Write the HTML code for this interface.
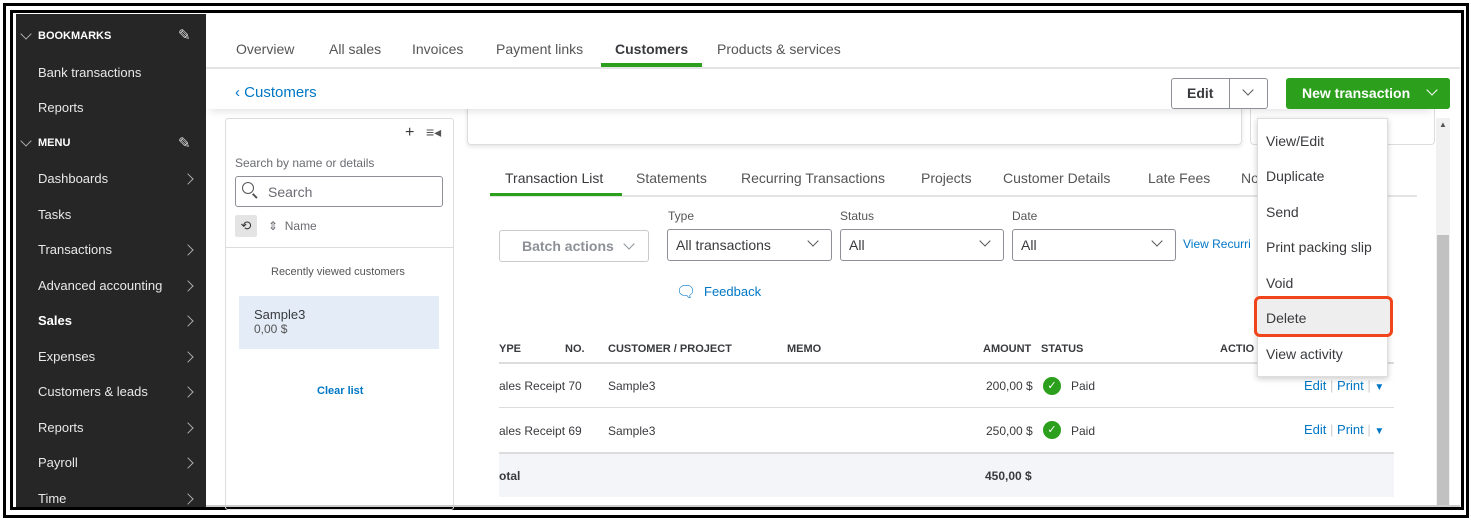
<!DOCTYPE html><html><head><meta charset="utf-8"><style>
*{box-sizing:border-box;margin:0;padding:0}
body{width:1471px;height:520px;background:#fff;position:relative;overflow:hidden;font-family:"Liberation Sans",sans-serif;color:#393a3d}
.a{position:absolute;white-space:nowrap}
.sb{position:absolute;left:16px;top:14px;width:190px;height:493px;background:#262626;color:#e8e8e8;font-size:13px}
.sb .a{left:22px}
.chev{position:absolute;left:168px;width:8px;height:8px;border-right:1.5px solid #aaa;border-top:1.5px solid #aaa;transform:rotate(45deg)}
.tab{font-size:14px;color:#555;top:41px}
.sel{position:absolute;border:1px solid #8d9096;border-radius:3px;height:32px;font-size:14px;color:#393a3d;padding:7px 8px}
.dn{position:absolute;width:8px;height:8px;border-right:1.5px solid #555;border-bottom:1.5px solid #555;transform:rotate(45deg)}
.th{font-size:11px;font-weight:bold;top:343px;color:#393a3d}
.td{font-size:12px;color:#393a3d}
.mi{position:absolute;left:8px;font-size:14px;color:#393a3d}
.ok{position:absolute;width:18px;height:18px;border-radius:50%;background:#2ca01c;color:#fff;font-size:11px;text-align:center;line-height:18px}
</style></head><body>
<div class="a" style="left:3px;top:3px;width:1466px;height:515px;border:3px solid #000"></div>
<div class="a" style="left:10px;top:10px;width:1454px;height:500px;border:3px solid #000"></div>

<div class="sb">
<div class="a" style="left:6px;top:16px;width:8px;height:8px;border-left:1px solid #aaa;border-bottom:1px solid #aaa;transform:rotate(-45deg)"></div>
<div class="a" style="top:16px;font-size:11px;font-weight:bold;color:#fff">BOOKMARKS</div>
<div class="a" style="left:162px!important;top:12px;font-size:15px;color:#ddd">✎</div>
<div class="a" style="top:51px">Bank transactions</div>
<div class="a" style="top:86px">Reports</div>
<div class="a" style="left:6px;top:123px;width:8px;height:8px;border-left:1px solid #aaa;border-bottom:1px solid #aaa;transform:rotate(-45deg)"></div>
<div class="a" style="top:123px;font-size:11px;font-weight:bold;color:#fff">MENU</div>
<div class="a" style="left:162px!important;top:120px;font-size:15px;color:#ddd">✎</div>
<div class="a" style="top:157px">Dashboards</div><div class="chev" style="top:161px"></div>
<div class="a" style="top:193px">Tasks</div>
<div class="a" style="top:228px">Transactions</div><div class="chev" style="top:232px"></div>
<div class="a" style="top:264px">Advanced accounting</div><div class="chev" style="top:268px"></div>
<div class="a" style="top:299px;font-weight:bold;color:#fff">Sales</div><div class="chev" style="top:303px"></div>
<div class="a" style="top:335px">Expenses</div><div class="chev" style="top:339px"></div>
<div class="a" style="top:370px">Customers &amp; leads</div><div class="chev" style="top:374px"></div>
<div class="a" style="top:406px">Reports</div><div class="chev" style="top:410px"></div>
<div class="a" style="top:441px">Payroll</div><div class="chev" style="top:445px"></div>
<div class="a" style="top:477px">Time</div><div class="chev" style="top:481px"></div>
</div>

<div class="a tab" style="left:236px">Overview</div>
<div class="a tab" style="left:329px">All sales</div>
<div class="a tab" style="left:412px">Invoices</div>
<div class="a tab" style="left:496px">Payment links</div>
<div class="a tab" style="left:615px;font-weight:bold;color:#393a3d">Customers</div>
<div class="a tab" style="left:717px">Products &amp; services</div>
<div class="a" style="left:206px;top:67px;width:1254px;height:2px;background:#e4e4e4"></div>
<div class="a" style="left:601px;top:63px;width:101px;height:4px;background:#2ca01c"></div>

<div class="a" style="left:235px;top:84px;font-size:15px;color:#0077c5">‹ Customers</div>
<div class="a" style="left:1171px;top:78px;width:97px;height:31px;border:1px solid #8d9096;border-radius:3px"></div>
<div class="a" style="left:1229px;top:78px;width:1px;height:31px;background:#8d9096"></div>
<div class="a" style="left:1187px;top:85px;font-size:14px;font-weight:bold">Edit</div>
<div class="dn" style="left:1244px;top:86px"></div>
<div class="a" style="left:1286px;top:78px;width:164px;height:31px;background:#2ca01c;border-radius:3px"></div>
<div class="a" style="left:1302px;top:85px;font-size:14px;font-weight:bold;color:#fff">New transaction</div>
<div class="a" style="left:1428px;top:86px;width:8px;height:8px;border-right:1.5px solid #fff;border-bottom:1.5px solid #fff;transform:rotate(45deg)"></div>

<div class="a" style="left:225px;top:118px;width:229px;height:392px;border:1px solid #ddd;border-radius:3px"></div>
<div class="a" style="left:405px;top:124px;font-size:16px">+</div>
<div class="a" style="left:426px;top:124px;font-size:14px;color:#555">≡◂</div>
<div class="a" style="left:235px;top:156px;font-size:12px;color:#6b6c72">Search by name or details</div>
<div class="a" style="left:235px;top:176px;width:208px;height:31px;border:1px solid #8d9096;border-radius:3px"></div>
<div class="a" style="left:242px;top:182px;width:12px;height:12px;border:1.5px solid #555;border-radius:50%"></div>
<div class="a" style="left:252px;top:195px;width:6px;height:1.5px;background:#555;transform:rotate(45deg)"></div>
<div class="a" style="left:268px;top:184px;font-size:14px;color:#6b6c72">Search</div>
<div class="a" style="left:235px;top:215px;width:22px;height:22px;background:#e4e4e4;border-radius:2px;font-size:13px;text-align:center;line-height:22px">⟲</div>
<div class="a" style="left:268px;top:219px;font-size:12px;color:#6b6c72">⇕&nbsp; Name</div>
<div class="a" style="left:226px;top:247px;width:227px;height:1px;background:#ddd"></div>
<div class="a" style="left:271px;top:266px;font-size:11px;color:#555">Recently viewed customers</div>
<div class="a" style="left:239px;top:296px;width:200px;height:53px;background:#e4ecf7"></div>
<div class="a" style="left:254px;top:307px;font-size:13px">Sample3</div>
<div class="a" style="left:254px;top:322px;font-size:12px;color:#555">0,00 $</div>
<div class="a" style="left:317px;top:385px;font-size:11px;font-weight:bold;color:#0077c5">Clear list</div>

<div class="a" style="left:467px;top:100px;width:775px;height:45px;border:1px solid #ddd;border-top:none;border-radius:0 0 4px 4px;box-shadow:0 2px 4px rgba(0,0,0,.1)"></div>
<div class="a" style="left:1250px;top:100px;width:185px;height:45px;border:1px solid #ddd;border-top:none;border-radius:0 0 4px 4px"></div>
<div class="a" style="left:490px;top:105px;width:60px;height:2px;background:#0077c5;opacity:.5"></div>
<div class="a" style="left:206px;top:69px;width:1230px;height:40px;background:#fff;box-shadow:0 6px 8px -4px rgba(0,0,0,.12)"></div>
<div class="a" style="left:1171px;top:78px;width:97px;height:31px;border:1px solid #8d9096;border-radius:3px"></div>
<div class="a" style="left:1229px;top:78px;width:1px;height:31px;background:#8d9096"></div>
<div class="a" style="left:1187px;top:85px;font-size:14px;font-weight:bold">Edit</div>
<div class="dn" style="left:1244px;top:86px"></div>
<div class="a" style="left:1286px;top:78px;width:164px;height:31px;background:#2ca01c;border-radius:3px"></div>
<div class="a" style="left:1302px;top:85px;font-size:14px;font-weight:bold;color:#fff">New transaction</div>
<div class="a" style="left:1428px;top:86px;width:8px;height:8px;border-right:1.5px solid #fff;border-bottom:1.5px solid #fff;transform:rotate(45deg)"></div>
<div class="a" style="left:235px;top:84px;font-size:15px;color:#0077c5">‹ Customers</div>

<div class="a" style="left:1436px;top:118px;width:14px;height:389px;background:#f1f1f1"></div>
<div class="a" style="left:1437px;top:235px;width:12px;height:272px;background:#c1c1c1"></div>
<div class="a" style="left:1439px;top:120px;font-size:8px;color:#555">▲</div>

<div class="a" style="left:505px;top:170px;font-size:14px">Transaction List</div>
<div class="a" style="left:636px;top:170px;font-size:14px;color:#555">Statements</div>
<div class="a" style="left:741px;top:170px;font-size:14px;color:#555">Recurring Transactions</div>
<div class="a" style="left:921px;top:170px;font-size:14px;color:#555">Projects</div>
<div class="a" style="left:1003px;top:170px;font-size:14px;color:#555">Customer Details</div>
<div class="a" style="left:1148px;top:170px;font-size:14px;color:#555">Late Fees</div>
<div class="a" style="left:1241px;top:170px;font-size:14px;color:#555">No</div>
<div class="a" style="left:490px;top:195px;width:927px;height:2px;background:#e4e4e4"></div>
<div class="a" style="left:490px;top:193px;width:132px;height:3px;background:#2ca01c"></div>

<div class="a" style="left:668px;top:209px;font-size:12px;color:#555">Type</div>
<div class="a" style="left:840px;top:209px;font-size:12px;color:#555">Status</div>
<div class="a" style="left:1012px;top:209px;font-size:12px;color:#555">Date</div>
<div class="sel" style="left:499px;top:230px;width:150px;height:32px;border-color:#c9cacc;color:#8d9096;padding-left:22px;font-weight:bold">Batch actions</div><div class="dn" style="left:625px;top:240px;border-color:#8d9096"></div>
<div class="sel" style="left:667px;top:229px;width:165px">All transactions</div><div class="dn" style="left:809px;top:237px"></div>
<div class="sel" style="left:840px;top:229px;width:164px">All</div><div class="dn" style="left:981px;top:237px"></div>
<div class="sel" style="left:1012px;top:229px;width:164px">All</div><div class="dn" style="left:1153px;top:237px"></div>
<div class="a" style="left:1183px;top:237px;font-size:12px;color:#0077c5">View Recurri</div>
<div class="a" style="left:676px;top:282px;font-size:16px;color:#0077c5">🗨</div>
<div class="a" style="left:704px;top:284px;font-size:13px;color:#0077c5">Feedback</div>

<div class="a th" style="left:499px">YPE</div>
<div class="a th" style="left:565px">NO.</div>
<div class="a th" style="left:608px">CUSTOMER / PROJECT</div>
<div class="a th" style="left:787px">MEMO</div>
<div class="a th" style="left:983px">AMOUNT</div>
<div class="a th" style="left:1041px">STATUS</div>
<div class="a th" style="left:1220px">ACTIO</div>
<div class="a" style="left:499px;top:362px;width:895px;height:2px;background:#dcdcdc"></div>
<div class="a td" style="left:499px;top:379px">ales Receipt 70</div>
<div class="a td" style="left:608px;top:379px">Sample3</div>
<div class="a td" style="left:986px;top:379px">200,00 $</div>
<div class="ok" style="left:1043px;top:377px">✓</div>
<div class="a td" style="left:1071px;top:379px">Paid</div>
<div class="a td" style="left:1304px;top:378px;color:#0077c5;font-size:13px">Edit <span style="color:#ccc">|</span> Print <span style="color:#ccc">|</span> <span style="font-size:10px">▼</span></div>
<div class="a" style="left:499px;top:407px;width:895px;height:1px;background:#dcdcdc"></div>
<div class="a td" style="left:499px;top:424px">ales Receipt 69</div>
<div class="a td" style="left:608px;top:424px">Sample3</div>
<div class="a td" style="left:986px;top:424px">250,00 $</div>
<div class="ok" style="left:1043px;top:421px">✓</div>
<div class="a td" style="left:1071px;top:424px">Paid</div>
<div class="a td" style="left:1304px;top:422px;color:#0077c5;font-size:13px">Edit <span style="color:#ccc">|</span> Print <span style="color:#ccc">|</span> <span style="font-size:10px">▼</span></div>
<div class="a" style="left:499px;top:452px;width:895px;height:45px;background:#f4f5f8;border-top:2px solid #dcdcdc"></div>
<div class="a td" style="left:499px;top:469px;font-weight:bold">otal</div>
<div class="a td" style="left:985px;top:469px;font-weight:bold">450,00 $</div>
<div class="a" style="left:206px;top:505px;width:1254px;height:2px;background:#ccc"></div>

<div class="a" style="left:1257px;top:118px;width:131px;height:259px;background:#fff;border:1px solid #ddd;box-shadow:0 2px 6px rgba(0,0,0,.2)">
<div class="mi" style="top:14px">View/Edit</div>
<div class="mi" style="top:49px">Duplicate</div>
<div class="mi" style="top:85px">Send</div>
<div class="mi" style="top:120px">Print packing slip</div>
<div class="mi" style="top:156px">Void</div>
<div class="a" style="left:-4px;top:177px;width:139px;height:41px;background:#eee;border:3px solid #f0441a;border-radius:6px"></div>
<div class="mi" style="top:191px">Delete</div>
<div class="mi" style="top:227px">View activity</div>
</div>
</body></html>
